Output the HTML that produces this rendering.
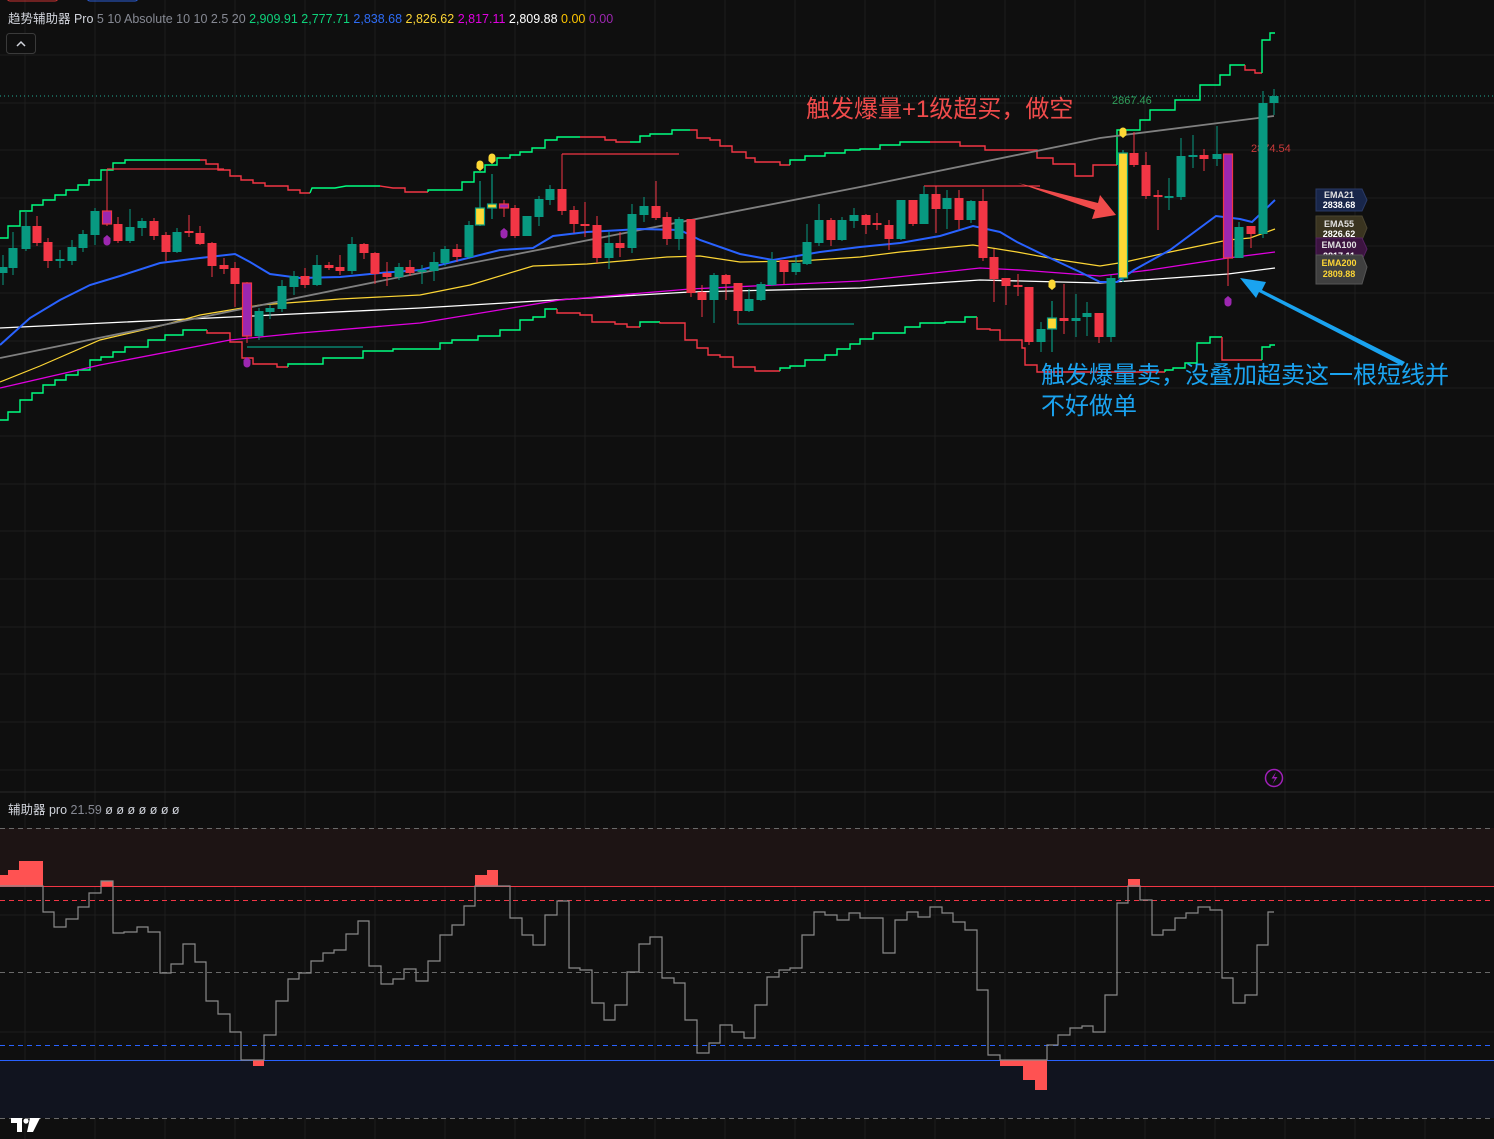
<!DOCTYPE html>
<html><head><meta charset="utf-8"><style>
html,body{margin:0;padding:0;background:#0f0f0f;width:1494px;height:1139px;overflow:hidden}
svg{display:block}
text{font-family:"Liberation Sans","Noto Sans CJK SC",sans-serif}
</style></head><body>
<svg width="1494" height="1139" viewBox="0 0 1494 1139" xmlns="http://www.w3.org/2000/svg">
<rect width="1494" height="1139" fill="#0f0f0f"/>
<g stroke="#1e1e1e" stroke-width="1">
<path d="M25 0V1139M95 0V1139M165 0V1139M235 0V1139M305 0V1139M375 0V1139M445 0V1139M515 0V1139M585 0V1139M655 0V1139M725 0V1139M795 0V1139M865 0V1139M935 0V1139M1005 0V1139M1075 0V1139M1145 0V1139M1215 0V1139M1285 0V1139M1355 0V1139M1425 0V1139"/>
<path d="M0 55H1494M0 103H1494M0 150H1494M0 198H1494M0 246H1494M0 293H1494M0 341H1494M0 388H1494M0 436H1494M0 484H1494M0 531H1494M0 579H1494M0 627H1494M0 674H1494M0 722H1494M0 770H1494"/>
<path d="M0 858H1494M0 915H1494M0 1032H1494M0 1090H1494"/>
</g>
<line x1="0" y1="792" x2="1494" y2="792" stroke="#2a2a2a"/>
<rect x="7" y="-6" width="51" height="7" rx="3" fill="none" stroke="#c33" />
<rect x="87" y="-6" width="51" height="7" rx="3" fill="none" stroke="#2b5dd6" />
<text x="8" y="23" font-size="12.5" fill="#d1d4dc">趋势辅助器 Pro<tspan fill="#868993"> 5 10 Absolute 10 10 2.5 20 </tspan><tspan fill="#0ed27b"> 2,909.91 </tspan><tspan fill="#0ed27b"> 2,777.71 </tspan><tspan fill="#2e6cf6"> 2,838.68 </tspan><tspan fill="#fcd535"> 2,826.62 </tspan><tspan fill="#e000e0"> 2,817.11 </tspan><tspan fill="#ffffff"> 2,809.88 </tspan><tspan fill="#fcc400"> 0.00 </tspan><tspan fill="#9c27b0"> 0.00</tspan></text>
<rect x="6.5" y="33.5" width="29" height="20" rx="3" fill="#0f0f0f" stroke="#3a3a3a"/>
<path d="M17 46l4-4 4 4" fill="none" stroke="#d1d4dc" stroke-width="1.5"/>
<line x1="0" y1="96" x2="1494" y2="96" stroke="#22ab94" stroke-dasharray="1 3"/>
<text x="1112" y="104" font-size="11" fill="#2f9e5a">2867.46</text>
<text x="1251" y="152" font-size="11" fill="#c93a3a">2874.54</text>
<g stroke-width="1.4" fill="none">
<polyline stroke="#00ff80" points="0,238 8,238 8,226 20,226 20,211 32,211 32,205 43,205 43,200 55,200 55,195 66,195 66,190 78,190 78,185 89,185 89,180 101,180 101,170 113,170 113,163 125,163 125,160 200,160"/>
<polyline stroke="#f23645" points="200,160 206,160 206,164 218,164 218,170 230,170 230,176 241,176 241,180 253,180 253,183 265,183 265,186 288,186 288,190 300,190 300,193 310,193"/>
<polyline stroke="#00ff80" points="310,193 312,188 335,188 346,186 380,186"/>
<polyline stroke="#f23645" points="380,186 393,188 405,188 405,192 416,192 428,192"/>
<polyline stroke="#00ff80" points="428,192 428,190 462,190 462,182 474,182 474,172 485,172 485,165 497,165 497,158 510,158 510,155 520,155 520,152 532,152 532,148 545,148 545,140 557,140 557,137 580,137"/>
<polyline stroke="#f23645" points="580,137 605,137 605,140 616,140 616,142 630,142"/>
<polyline stroke="#00ff80" points="630,142 640,142 640,136 650,136 650,134 672,134 672,130 690,130"/>
<polyline stroke="#f23645" points="690,130 697,130 697,138 710,138 710,140 720,140 720,146 732,146 732,152 746,152 746,158 755,158 755,162 780,162 780,165 790,165"/>
<polyline stroke="#00ff80" points="790,165 790,160 805,160 805,156 825,156 825,153 845,153 845,150 860,150 860,149 880,149 880,145 900,145 900,142 930,142"/>
<polyline stroke="#f23645" points="930,142 960,142 960,146 985,146 985,150 1037,150 1037,158 1053,158 1053,164 1075,164 1075,176 1093,176 1093,165 1117,165"/>
<polyline stroke="#00ff80" points="1117,165 1117,130 1140,130 1140,120 1150,120 1150,110 1175,110 1175,100 1200,100 1200,85 1220,85 1220,75 1230,75 1230,65 1245,65"/>
<polyline stroke="#f23645" points="1245,65 1245,70 1255,70 1255,73 1262,73"/>
<polyline stroke="#00ff80" points="1262,73 1262,40 1270,40 1270,33 1275,33"/>
<polyline stroke="#00ff80" points="0,420 8,420 8,412 20,412 20,400 32,400 32,393 43,393 43,385 55,385 55,380 66,380 66,375 78,375 78,370 90,370 90,360 101,360 101,357 113,357 113,352 125,352 125,347 148,347 148,340 165,340 165,335 183,335 183,330 207,330"/>
<polyline stroke="#f23645" points="207,330 207,333 230,333 230,342 242,342 242,358 253,358 253,364 277,364 277,367 288,367"/>
<polyline stroke="#00ff80" points="288,367 288,364 323,364 323,358 363,358 363,351 393,351 393,349 440,349 440,343 452,343 452,340 478,340 478,336 500,336 500,330 520,330 520,320 533,320 533,317 545,317 545,309 557,309"/>
<polyline stroke="#f23645" points="557,309 557,313 580,313 580,315 592,315 592,322 615,322 615,324 627,324 627,327 640,327"/>
<polyline stroke="#00ff80" points="640,327 640,322 660,322"/>
<polyline stroke="#f23645" points="660,322 660,323 685,323 685,340 697,340 697,348 708,348 708,355 720,355 720,357 733,357 733,367 755,367 755,371 780,371"/>
<polyline stroke="#00ff80" points="780,371 780,368 790,368 790,366 805,366 805,360 825,360 825,355 837,355 837,349 850,349 850,344 860,344 860,339 873,339 873,333 905,333 905,327 920,327 920,323 945,323 945,322 965,322 965,317 977,317"/>
<polyline stroke="#f23645" points="977,317 977,329 990,329 990,330 1000,330 1000,340 1022,340 1022,348 1025,348 1025,365 1037,365 1037,372 1165,372"/>
<polyline stroke="#00ff80" points="1165,372 1165,370 1173,370 1173,368 1185,368 1185,363 1197,363 1197,343 1210,343 1210,337 1222,337"/>
<polyline stroke="#f23645" points="1222,337 1222,360 1262,360"/>
<polyline stroke="#00ff80" points="1262,360 1262,347 1270,347 1270,345 1275,345"/>
</g>
<g stroke-width="1.2">
<line x1="107" y1="169" x2="224" y2="169" stroke="#f23645"/>
<line x1="562" y1="154" x2="679" y2="154" stroke="#f23645"/>
<line x1="924" y1="186" x2="1040" y2="186" stroke="#f23645"/>
<line x1="247" y1="347" x2="363" y2="347" stroke="#089981"/>
<line x1="738" y1="324" x2="854" y2="324" stroke="#089981"/>
</g>
<polyline fill="none" stroke="#ffffff" stroke-width="1.3" points="0,328 420,308 690,292 860,288 980,280 1100,283 1228,274 1275,268"/>
<polyline fill="none" stroke="#e000e0" stroke-width="1.3" points="0,388 100,365 230,340 300,333 420,323 560,300 690,289 860,281 980,268 1020,270 1100,276 1150,270 1228,258 1275,252"/>
<polyline fill="none" stroke="#fcd535" stroke-width="1.2" points="0,382 40,366 100,340 160,326 200,315 260,305 340,299 420,295 470,285 533,266 587,264 667,257 700,256 740,262 800,261 860,257 900,252 973,245 1017,252 1060,260 1100,266 1125,262 1170,252 1228,240 1250,238 1275,229"/>
<polyline fill="none" stroke="#808080" stroke-width="1.8" points="0,358 420,273 860,187 1100,138 1274,116"/>
<polyline fill="none" stroke="#2962ff" stroke-width="2" points="0,345 30,318 60,300 90,285 120,276 160,263 200,258 235,254 250,262 270,274 300,278 340,277 380,273 420,270 460,260 500,250 533,248 553,236 587,232 640,229 680,230 700,240 740,254 773,260 820,252 860,247 900,243 940,236 973,226 1000,232 1017,242 1050,258 1080,272 1100,282 1117,282 1134,270 1170,250 1216,216 1240,219 1252,222 1275,200"/>
<g>
<g fill="#089981" stroke="#089981">
<path fill="none" d="M3 255V285M13 232V275M26 211V251M60 250V268M72 240V265M83 230V252M95 208V245M130 209V243M142 218V236M177 228V253M259 308V340M270 305V319M282 280V312M294 271V295M317 255V286M352 237V274M399 263V280M422 265V284M434 252V281M445 246V266M469 221V259M527 216V236M539 196V226M550 185V205M609 232V269M632 204V253M644 197V222M679 217V250M714 273V323M749 289V312M761 282V301M772 252V286M796 257V275M807 224V265M819 204V246M842 217V241M854 208V228M901 200V240M924 186V224M947 190V229M971 200V223M1041 322V352M1076 294V337M1087 302V336M1111 275V342M1169 178V210M1181 138V200M1193 135V168M1217 126V166M1239 222V258M1263 91V238M1274 89V115"/>
<path stroke="none" d="M-1.5 267h9v6h-9zM8.5 248h9v20h-9zM21.5 226h9v23h-9zM55.5 259h9v2h-9zM67.5 247h9v14h-9zM78.5 234h9v14h-9zM90.5 211h9v24h-9zM125.5 227h9v14h-9zM137.5 221h9v7h-9zM172.5 232h9v20h-9zM254.5 311h9v25h-9zM265.5 308h9v4h-9zM277.5 286h9v23h-9zM289.5 276h9v11h-9zM312.5 265h9v20h-9zM347.5 244h9v27h-9zM394.5 267h9v10h-9zM417.5 270h9v2h-9zM429.5 262h9v9h-9zM440.5 249h9v14h-9zM464.5 225h9v32h-9zM522.5 216h9v20h-9zM534.5 199h9v18h-9zM545.5 189h9v11h-9zM604.5 243h9v15h-9zM627.5 214h9v34h-9zM639.5 206h9v9h-9zM674.5 219h9v20h-9zM709.5 275h9v25h-9zM744.5 299h9v12h-9zM756.5 284h9v16h-9zM767.5 260h9v25h-9zM791.5 263h9v9h-9zM802.5 242h9v22h-9zM814.5 220h9v23h-9zM837.5 220h9v20h-9zM849.5 215h9v6h-9zM896.5 200h9v39h-9zM919.5 194h9v30h-9zM942.5 198h9v11h-9zM966.5 201h9v19h-9zM1036.5 329h9v13h-9zM1071.5 318h9v3h-9zM1082.5 313h9v4h-9zM1106.5 278h9v59h-9zM1164.5 196h9v2h-9zM1176.5 156h9v41h-9zM1188.5 155h9v2h-9zM1212.5 154h9v5h-9zM1234.5 227h9v31h-9zM1258.5 103h9v131h-9zM1269.5 96h9v7h-9z"/>
</g>
<g fill="#f23645" stroke="#f23645">
<path fill="none" d="M37 216V246M48 238V268M118 217V243M154 218V240M166 232V261M189 215V237M200 226V245M212 242V277M224 258V274M235 262V307M305 268V288M329 262V270M340 255V275M364 243V259M375 252V284M387 262V286M410 260V276M457 244V262M515 205V238M562 154V215M574 206V233M585 202V237M597 216V263M620 232V257M656 181V220M667 212V245M691 219V297M702 285V317M726 274V300M738 283V324M784 260V284M831 218V246M866 214V234M877 213V230M889 220V250M913 200V226M936 186V233M959 190V229M983 189V261M994 249V302M1006 278V305M1018 274V296M1029 287V345M1064 284V334M1099 313V343M1134 132V167M1146 152V199M1158 190V230M1204 149V171M1251 226V248M107 169V226M247 282V343M504 200V217M1228 154V286"/>
<path stroke="none" d="M32.5 226h9v17h-9zM43.5 242h9v19h-9zM113.5 224h9v17h-9zM149.5 221h9v15h-9zM161.5 235h9v17h-9zM184.5 231h9v2h-9zM195.5 233h9v11h-9zM207.5 243h9v23h-9zM219.5 265h9v4h-9zM230.5 268h9v16h-9zM300.5 276h9v9h-9zM324.5 265h9v3h-9zM335.5 267h9v4h-9zM359.5 244h9v9h-9zM370.5 253h9v21h-9zM382.5 273h9v4h-9zM405.5 267h9v6h-9zM452.5 249h9v8h-9zM510.5 208h9v28h-9zM557.5 189h9v22h-9zM569.5 210h9v14h-9zM580.5 224h9v2h-9zM592.5 225h9v33h-9zM615.5 243h9v5h-9zM651.5 206h9v12h-9zM662.5 217h9v22h-9zM686.5 219h9v74h-9zM697.5 292h9v8h-9zM721.5 275h9v9h-9zM733.5 283h9v28h-9zM779.5 260h9v12h-9zM826.5 220h9v20h-9zM861.5 215h9v10h-9zM872.5 223h9v2h-9zM884.5 225h9v14h-9zM908.5 200h9v24h-9zM931.5 194h9v15h-9zM954.5 198h9v22h-9zM978.5 201h9v57h-9zM989.5 257h9v22h-9zM1001.5 278h9v8h-9zM1013.5 285h9v2h-9zM1024.5 287h9v55h-9zM1059.5 318h9v3h-9zM1094.5 313h9v24h-9zM1129.5 153h9v12h-9zM1141.5 165h9v31h-9zM1153.5 195h9v2h-9zM1199.5 155h9v4h-9zM1246.5 226h9v8h-9z"/>
</g>
<g fill="#9c27b0" stroke="#f23645" stroke-width="1.2">
<rect x="102.5" y="211" width="9" height="13"/>
<rect x="242.5" y="283" width="9" height="53"/>
<rect x="499.5" y="204" width="9" height="4"/>
<rect x="1223.5" y="154" width="9" height="104"/>
</g>
<g fill="#fdd835" stroke="#089981" stroke-width="1.2">
<path fill="none" d="M480 181V226M492 174V219M1052 301V352M1123 150V282"/>
<rect x="475.5" y="208" width="9" height="17"/>
<rect x="487.5" y="204" width="9" height="4"/>
<rect x="1047.5" y="318" width="9" height="11"/>
<rect x="1118.5" y="153" width="9" height="125"/>
</g>
</g>
<g fill="#9c27b0">
<path d="M107 235l3.5 3v4a3.5 3.5 0 0 1-7 0v-4z"/>
<path d="M247 357l3.5 3v4a3.5 3.5 0 0 1-7 0v-4z"/>
<path d="M504 228l3.5 3v4a3.5 3.5 0 0 1-7 0v-4z"/>
<path d="M1228 296l3.5 3v4a3.5 3.5 0 0 1-7 0v-4z"/>
</g>
<g fill="#fdd835">
<path d="M480 171l-3.5-3v-4a3.5 3.5 0 0 1 7 0v4z"/>
<path d="M492 164l-3.5-3v-4a3.5 3.5 0 0 1 7 0v4z"/>
<path d="M1052 290l-3.5-3v-4a3.5 3.5 0 0 1 7 0v4z"/>
<path d="M1123 138l-3.5-3v-4a3.5 3.5 0 0 1 7 0v4z"/>
</g>
<path d="M1018 183L1098 203L1100 195L1116 215L1092 219L1095 210Z" fill="#f04b4b"/>
<path d="M1405 362L1262 290L1266 282L1240 278L1256 298L1259 292L1402 366Z" fill="#1aa3f0"/>
<text x="806" y="117" font-size="24" fill="#f04b4b" font-family="Noto Sans CJK SC, sans-serif">触发爆量+1级超买，做空</text>
<text x="1041" y="383" font-size="24" fill="#1aa3f0" font-family="Noto Sans CJK SC, sans-serif">触发爆量卖，没叠加超卖这一根短线并</text>
<text x="1041" y="414" font-size="24" fill="#1aa3f0" font-family="Noto Sans CJK SC, sans-serif">不好做单</text>
<g font-size="9" font-weight="bold" text-anchor="middle">
<path d="M1316 189h46l5 11-5 11h-46z" fill="#18264a" stroke="#2a3a66"/>
<text x="1339" y="198" fill="#e0e0e0">EMA21</text><text x="1339" y="208" fill="#ffffff">2838.68</text>
<path d="M1316 216h46l5 12-5 12h-46z" fill="#3a3420" stroke="#4a4430"/>
<text x="1339" y="227" fill="#e0e0e0">EMA55</text><text x="1339" y="237" fill="#ffffff">2826.62</text>
<path d="M1316 238h46l5 11-5 11h-46z" fill="#3c1440" stroke="#552060"/>
<text x="1339" y="248" fill="#e0e0e0">EMA100</text><text x="1339" y="259" fill="#ffffff">2817.11</text>
<path d="M1316 255h46l5 12-5 17h-46z" fill="#3f3f3f" stroke="#555"/>
<text x="1339" y="266" fill="#fcd535">EMA200</text><text x="1339" y="277" fill="#fcd535">2809.88</text>
</g>
<circle cx="1274" cy="778" r="8.5" fill="none" stroke="#a020b8" stroke-width="1.5"/>
<path d="M1276 772l-4.5 6.5h3.5l-2.5 5.5 5-7h-3.5z" fill="#a020b8"/>
<rect x="0" y="828" width="1494" height="58" fill="#1d1414"/>
<rect x="0" y="1060" width="1494" height="58" fill="#11141f"/>
<text x="8" y="814" font-size="12.5" fill="#d1d4dc">辅助器 pro <tspan fill="#868993"> 21.59 </tspan><tspan fill="#d1d4dc">ø ø ø ø ø ø ø</tspan></text>
<g stroke-dasharray="5 4" stroke-width="1">
<line x1="0" y1="828.5" x2="1494" y2="828.5" stroke="#6a6a6a"/>
<line x1="0" y1="900.5" x2="1494" y2="900.5" stroke="#f23645"/>
<line x1="0" y1="972.5" x2="1494" y2="972.5" stroke="#6a6a6a"/>
<line x1="0" y1="1045.5" x2="1494" y2="1045.5" stroke="#2962ff"/>
<line x1="0" y1="1118.5" x2="1494" y2="1118.5" stroke="#6a6a6a"/>
</g>
<line x1="0" y1="886.5" x2="1494" y2="886.5" stroke="#f23645"/>
<line x1="0" y1="1060.5" x2="1494" y2="1060.5" stroke="#2962ff"/>
<g fill="#ff5252">
<rect x="0" y="875" width="8" height="11"/><rect x="8" y="870" width="11" height="16"/><rect x="19" y="861" width="24" height="25"/>
<rect x="101" y="881" width="12" height="5"/>
<rect x="253" y="1060" width="11" height="6"/>
<rect x="475" y="875" width="12" height="11"/><rect x="487" y="870" width="11" height="16"/>
<rect x="1000" y="1060" width="23" height="6"/><rect x="1023" y="1060" width="12" height="20"/><rect x="1035" y="1060" width="12" height="30"/>
<rect x="1128" y="879" width="12" height="7"/>
</g>
<polyline fill="none" stroke="#8a8a8a" stroke-width="1.2" points="0,886 43,886 43,912 54,912 54,927 66,927 66,919 78,919 78,907 89,907 89,893 101,893 101,881 113,881 113,933 124,933 124,932 137,932 137,927 148,927 148,932 160,932 160,973 171,973 171,964 183,964 183,944 195,944 195,962 206,962 206,1001 218,1001 218,1014 230,1014 230,1032 241,1032 241,1060 264,1060 264,1035 276,1035 276,1001 288,1001 288,979 299,979 299,973 311,973 311,961 323,961 323,953 334,953 334,950 346,950 346,934 358,934 358,921 369,921 369,966 381,966 381,984 393,984 393,979 404,979 404,969 416,969 416,981 428,981 428,961 440,961 440,935 452,935 452,925 464,925 464,906 475,906 475,886 498,886 498,886 510,886 510,918 522,918 522,935 533,935 533,945 545,945 545,915 557,915 557,901 569,901 569,968 580,968 580,970 592,970 592,1003 604,1003 604,1020 615,1020 615,1005 627,1005 627,972 639,972 639,944 650,944 650,937 662,937 662,978 674,978 674,983 685,983 685,1020 697,1020 697,1053 709,1053 709,1043 720,1043 720,1025 732,1025 732,1032 744,1032 744,1038 755,1038 755,1005 767,1005 767,977 779,977 779,970 790,970 790,968 802,968 802,935 814,935 814,912 825,912 825,915 837,915 837,920 849,920 849,913 860,913 860,918 883,918 883,953 895,953 895,920 907,920 907,912 918,912 918,917 930,917 930,907 942,907 942,913 953,913 953,922 965,922 965,930 977,930 977,990 988,990 988,1055 1000,1055 1000,1060 1047,1060 1047,1045 1058,1045 1058,1035 1070,1035 1070,1028 1082,1028 1082,1026 1093,1026 1093,1032 1105,1032 1105,995 1117,995 1117,903 1128,903 1128,886 1140,886 1140,900 1152,900 1152,935 1163,935 1163,930 1175,930 1175,918 1186,918 1186,913 1198,913 1198,907 1210,907 1210,910 1222,910 1222,978 1233,978 1233,1003 1245,1003 1245,995 1257,995 1257,945 1268,945 1268,912 1274,912"/>
<g fill="#ffffff">
<path d="M11 1118h11v14h-5v-9h-6z"/>
<circle cx="26" cy="1121" r="2.6"/>
<path d="M30 1118h10l-7 14h-6z"/>
</g>
</svg>
</body></html>
